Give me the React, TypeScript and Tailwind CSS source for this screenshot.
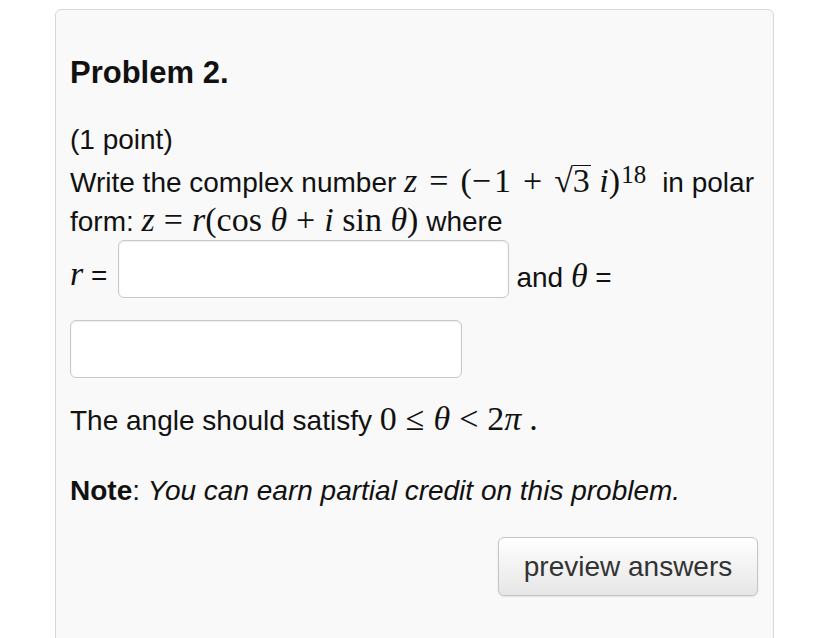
import React from "react";

const sans = "font-['Liberation_Sans',Arial,sans-serif]";
const serif = "font-['Liberation_Serif','Times_New_Roman',serif]";

function M({ children, className = "" }: { children: React.ReactNode; className?: string }) {
  return <span className={`${serif} text-[34px] leading-none ${className}`}>{children}</span>;
}

function I({ children }: { children: React.ReactNode }) {
  return <span className="italic">{children}</span>;
}

// relation / binary operator with math spacing
function Op({ children, wide = false }: { children: React.ReactNode; wide?: boolean }) {
  return <span className={wide ? "mx-[12px]" : "mx-[9px]"}>{children}</span>;
}

export default function App() {
  return (
    <div className={`w-[828px] h-[638px] bg-white pl-[55px] pt-[9px] overflow-hidden ${sans}`}>
      <div className="w-[719px] h-[640px] bg-[#f9f9f9] border border-[#d8d8d8] rounded-[6px] px-[14px] text-[#111] text-[28px] leading-[39px]">
        {/* Heading */}
        <h2 className="font-bold text-[31px] mt-[46px] leading-[34px] text-[#111]">Problem 2.</h2>

        <div className="mt-[30px]">(1 point)</div>
        <div className="h-[39px] mt-[4px]">
          Write the complex number{" "}
          <M>
            <I>z</I>
            <Op wide>=</Op>(<span className="mr-[3px]">−</span>1<Op wide>+</Op>
            <span className="inline-block">
              √<span className="border-t-[1.5px] border-[#111] leading-[30px] inline-block pr-[1px]">3</span>
            </span>{" "}
            <I>i</I>)
            <sup className="text-[25px] relative -top-[9px] ml-[1px]">18</sup>
          </M>
          <span className="ml-[16px]">in polar</span>
        </div>
        <div>
          form:{" "}
          <M>
            <I>z</I>
            <Op>=</Op>
            <I>r</I>(cos <I>θ</I>
            <Op>+</Op>
            <I>i</I> sin <I>θ</I>)
          </M>{" "}
          where
        </div>

        {/* Inputs */}
        <div className="flex items-center -mt-[1px]">
          <span className="mt-[12px]">
            <M><I>r</I></M> =
          </span>
          <input className="ml-[11px] w-[391px] h-[58px] bg-white border border-[#c8c8c8] rounded-[6px] shadow-[inset_0_1px_2px_rgba(0,0,0,0.08)] outline-none" />
          <span className="ml-[7px] mt-[16px]">
            and <M><I>θ</I></M> =
          </span>
        </div>
        <input className="block mt-[22px] w-[392px] h-[58px] bg-white border border-[#c8c8c8] rounded-[6px] shadow-[inset_0_1px_2px_rgba(0,0,0,0.08)] outline-none" />

        <div className="mt-[23px]">
          The angle should satisfy{" "}
          <M>
            0<Op>≤</Op>
            <I>θ</I>
            <Op>&lt;</Op>2<I>π</I>
            <span className="ml-[8px]">.</span>
          </M>
        </div>

        <div className="mt-[31px]">
          <span className="font-bold">Note</span>: <span className="italic">You can earn partial credit on this problem.</span>
        </div>

        <div className="flex justify-end mt-[27px] pr-[1px]">
          <button className="w-[260px] h-[59px] rounded-[6px] border border-[#c4c4c4] bg-gradient-to-b from-white to-[#e6e6e6] shadow-[0_1px_2px_rgba(0,0,0,0.1)] text-[#333] text-[28px]">
            preview answers
          </button>
        </div>
      </div>
    </div>
  );
}
